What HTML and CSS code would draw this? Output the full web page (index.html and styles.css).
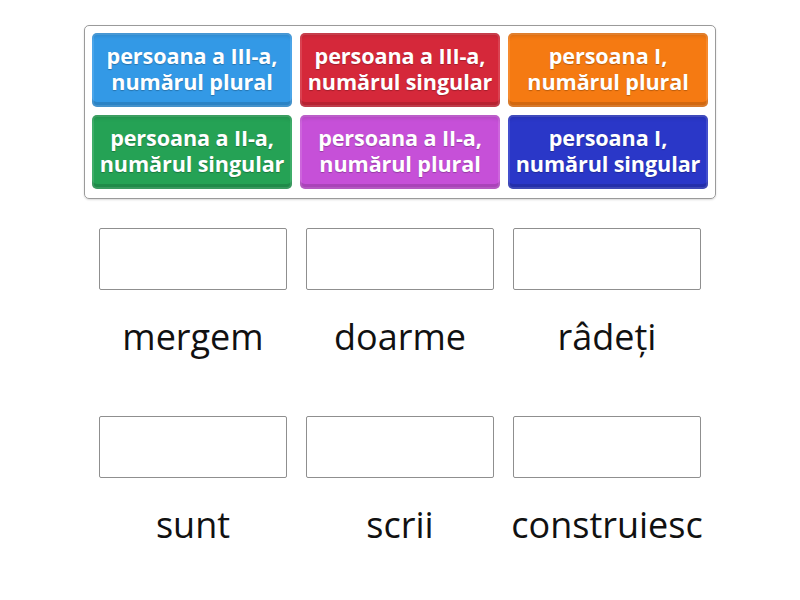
FILE: index.html
```html
<!DOCTYPE html>
<html lang="ro">
<head>
<meta charset="utf-8">
<title>Potrivire</title>
<link rel="stylesheet" href="styles.css">
</head>
<body>
<div class="page">
  <div class="bank">
    <div class="tile blue">persoana a III-a, numărul plural</div>
    <div class="tile red">persoana a III-a, numărul singular</div>
    <div class="tile orange">persoana I, numărul plural</div>
    <div class="tile green">persoana a II-a, numărul singular</div>
    <div class="tile purple">persoana a II-a, numărul plural</div>
    <div class="tile navy">persoana I, numărul singular</div>
  </div>
  <div class="targets">
    <div class="item"><div class="slot"></div><div class="word">mergem</div></div>
    <div class="item"><div class="slot"></div><div class="word">doarme</div></div>
    <div class="item"><div class="slot"></div><div class="word">râdeți</div></div>
    <div class="item"><div class="slot"></div><div class="word">sunt</div></div>
    <div class="item"><div class="slot"></div><div class="word">scrii</div></div>
    <div class="item"><div class="slot"></div><div class="word">construiesc</div></div>
  </div>
</div>
</body>
</html>
```

FILE: styles.css
```css
* { box-sizing: border-box; }
html, body { margin: 0; padding: 0; background: #fff; }
body { font-family: "Open Sans", "Liberation Sans", sans-serif; color: #111; }
.page { width: 800px; height: 600px; padding-top: 25px; }
.bank {
  width: 632px;
  margin: 0 auto;
  border: 1px solid #9a9a9a;
  border-radius: 5px;
  padding: 7px 7px 9px 7px;
  display: grid;
  grid-template-columns: repeat(3, 1fr);
  gap: 8px;
  box-shadow: 0 1px 2px rgba(0,0,0,0.15);
}
.tile {
  height: 74px;
  border-radius: 5px;
  color: #fff;
  font-weight: 700;
  font-size: 21.6px;
  line-height: 26px;
  text-align: center;
  display: flex;
  align-items: center;
  justify-content: center;
  padding: 0 2px 3px;
  letter-spacing: -0.1px;
  text-shadow: 0 1px 1px rgba(0,0,0,0.25);
  box-shadow: inset 0 0 0 2px rgba(255,255,255,0.12), inset 0 -5px 0 rgba(0,0,0,0.14), inset 0 7px 4px -4px rgba(0,0,0,0.12);
}
.blue { background: #3399e6; }
.red { background: #d5283a; }
.orange { background: #f57a12; }
.green { background: #25a255; }
.purple { background: #c650d8; }
.navy { background: #2a37c8; }
.targets {
  width: 621px;
  margin: 29px auto 0;
  display: grid;
  grid-template-columns: repeat(3, 1fr);
  row-gap: 54px;
}
.item { display: flex; flex-direction: column; align-items: center; }
.slot {
  width: 188px;
  height: 62px;
  border: 1px solid #8f8f8f;
  border-radius: 2px;
  background: #fff;
}
.word {
  margin-top: 22px;
  font-size: 36px;
  line-height: 50px;
  color: #111;
  white-space: nowrap;
}
```
